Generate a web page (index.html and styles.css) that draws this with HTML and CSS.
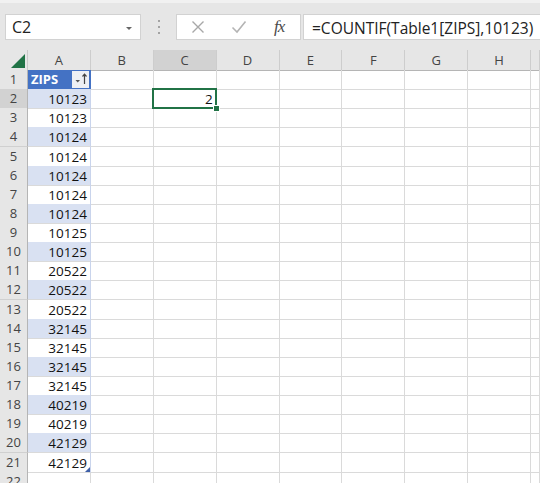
FILE: index.html
```html
<!DOCTYPE html>
<html lang="en">
<head>
    <meta charset="UTF-8">
    <meta name="viewport" content="width=device-width, initial-scale=1.0">
    <title>COUNTIF ZIPS</title>
    <link rel="stylesheet" href="styles.css">
</head>
<body>
    <div class="toolbar">
        <div class="namebox">
            <span>C2</span>
            <span class="caret"></span>
        </div>
        <div class="grip"><span></span><span></span><span></span></div>
        <div class="fxbox">
            <svg class="icon-x" width="14" height="14" viewBox="0 0 14 14">
                <path d="M1.5 1.5 L12.5 12.5 M12.5 1.5 L1.5 12.5" stroke="#a8a8a8" stroke-width="1.4" fill="none"/>
            </svg>
            <svg class="icon-check" width="16" height="14" viewBox="0 0 16 14">
                <path d="M1.5 7.5 L6 12 L14.5 1.5" stroke="#b4b4b4" stroke-width="1.6" fill="none"/>
            </svg>
            <span class="fx">fx</span>
        </div>
        <div class="formula">=COUNTIF(Table1[ZIPS],10123)</div>
    </div>

    <div class="sheet">
        <div class="row head">
            <div class="corner">
                <svg width="14" height="14" viewBox="0 0 14 14"><path d="M14 0 L14 14 L0 14 Z" fill="#217346"/></svg>
            </div>
            <div class="ch">A</div>
            <div class="ch">B</div>
            <div class="ch sel-head">C</div>
            <div class="ch">D</div>
            <div class="ch">E</div>
            <div class="ch">F</div>
            <div class="ch">G</div>
            <div class="ch">H</div>
            <div class="ch"></div>
        </div>

        <div class="row">
            <div class="rh">1</div>
            <div class="c th">
                <span>ZIPS</span>
                <span class="filter">
                    <svg width="17" height="17" viewBox="0 0 17 17">
                        <path d="M3.5 9 L8 9 L5.75 11.5 Z" fill="#555"/>
                        <path d="M12.5 13 L12.5 3.5 M10.5 5.5 L12.5 3.2 L14.5 5.5" stroke="#444" stroke-width="1.2" fill="none"/>
                    </svg>
                </span>
            </div>
            <div class="c"></div><div class="c"></div><div class="c"></div><div class="c"></div><div class="c"></div><div class="c"></div><div class="c"></div><div class="c"></div>
        </div>
        <div class="row">
            <div class="rh sel-head">2</div>
            <div class="c a band">10123</div>
            <div class="c"></div>
            <div class="c sel">2<span class="handle"></span></div>
            <div class="c"></div><div class="c"></div><div class="c"></div><div class="c"></div><div class="c"></div><div class="c"></div>
        </div>
        <div class="row">
            <div class="rh">3</div><div class="c a">10123</div>
            <div class="c"></div><div class="c"></div><div class="c"></div><div class="c"></div><div class="c"></div><div class="c"></div><div class="c"></div><div class="c"></div>
        </div>
        <div class="row">
            <div class="rh">4</div><div class="c a band">10124</div>
            <div class="c"></div><div class="c"></div><div class="c"></div><div class="c"></div><div class="c"></div><div class="c"></div><div class="c"></div><div class="c"></div>
        </div>
        <div class="row">
            <div class="rh">5</div><div class="c a">10124</div>
            <div class="c"></div><div class="c"></div><div class="c"></div><div class="c"></div><div class="c"></div><div class="c"></div><div class="c"></div><div class="c"></div>
        </div>
        <div class="row">
            <div class="rh">6</div><div class="c a band">10124</div>
            <div class="c"></div><div class="c"></div><div class="c"></div><div class="c"></div><div class="c"></div><div class="c"></div><div class="c"></div><div class="c"></div>
        </div>
        <div class="row">
            <div class="rh">7</div><div class="c a">10124</div>
            <div class="c"></div><div class="c"></div><div class="c"></div><div class="c"></div><div class="c"></div><div class="c"></div><div class="c"></div><div class="c"></div>
        </div>
        <div class="row">
            <div class="rh">8</div><div class="c a band">10124</div>
            <div class="c"></div><div class="c"></div><div class="c"></div><div class="c"></div><div class="c"></div><div class="c"></div><div class="c"></div><div class="c"></div>
        </div>
        <div class="row">
            <div class="rh">9</div><div class="c a">10125</div>
            <div class="c"></div><div class="c"></div><div class="c"></div><div class="c"></div><div class="c"></div><div class="c"></div><div class="c"></div><div class="c"></div>
        </div>
        <div class="row">
            <div class="rh">10</div><div class="c a band">10125</div>
            <div class="c"></div><div class="c"></div><div class="c"></div><div class="c"></div><div class="c"></div><div class="c"></div><div class="c"></div><div class="c"></div>
        </div>
        <div class="row">
            <div class="rh">11</div><div class="c a">20522</div>
            <div class="c"></div><div class="c"></div><div class="c"></div><div class="c"></div><div class="c"></div><div class="c"></div><div class="c"></div><div class="c"></div>
        </div>
        <div class="row">
            <div class="rh">12</div><div class="c a band">20522</div>
            <div class="c"></div><div class="c"></div><div class="c"></div><div class="c"></div><div class="c"></div><div class="c"></div><div class="c"></div><div class="c"></div>
        </div>
        <div class="row">
            <div class="rh">13</div><div class="c a">20522</div>
            <div class="c"></div><div class="c"></div><div class="c"></div><div class="c"></div><div class="c"></div><div class="c"></div><div class="c"></div><div class="c"></div>
        </div>
        <div class="row">
            <div class="rh">14</div><div class="c a band">32145</div>
            <div class="c"></div><div class="c"></div><div class="c"></div><div class="c"></div><div class="c"></div><div class="c"></div><div class="c"></div><div class="c"></div>
        </div>
        <div class="row">
            <div class="rh">15</div><div class="c a">32145</div>
            <div class="c"></div><div class="c"></div><div class="c"></div><div class="c"></div><div class="c"></div><div class="c"></div><div class="c"></div><div class="c"></div>
        </div>
        <div class="row">
            <div class="rh">16</div><div class="c a band">32145</div>
            <div class="c"></div><div class="c"></div><div class="c"></div><div class="c"></div><div class="c"></div><div class="c"></div><div class="c"></div><div class="c"></div>
        </div>
        <div class="row">
            <div class="rh">17</div><div class="c a">32145</div>
            <div class="c"></div><div class="c"></div><div class="c"></div><div class="c"></div><div class="c"></div><div class="c"></div><div class="c"></div><div class="c"></div>
        </div>
        <div class="row">
            <div class="rh">18</div><div class="c a band">40219</div>
            <div class="c"></div><div class="c"></div><div class="c"></div><div class="c"></div><div class="c"></div><div class="c"></div><div class="c"></div><div class="c"></div>
        </div>
        <div class="row">
            <div class="rh">19</div><div class="c a">40219</div>
            <div class="c"></div><div class="c"></div><div class="c"></div><div class="c"></div><div class="c"></div><div class="c"></div><div class="c"></div><div class="c"></div>
        </div>
        <div class="row">
            <div class="rh">20</div><div class="c a band">42129</div>
            <div class="c"></div><div class="c"></div><div class="c"></div><div class="c"></div><div class="c"></div><div class="c"></div><div class="c"></div><div class="c"></div>
        </div>
        <div class="row">
            <div class="rh">21</div><div class="c a last">42129<span class="resize"></span></div>
            <div class="c"></div><div class="c"></div><div class="c"></div><div class="c"></div><div class="c"></div><div class="c"></div><div class="c"></div><div class="c"></div>
        </div>
        <div class="row">
            <div class="rh">22</div><div class="c"></div>
            <div class="c"></div><div class="c"></div><div class="c"></div><div class="c"></div><div class="c"></div><div class="c"></div><div class="c"></div><div class="c"></div>
        </div>
    </div>
</body>
</html>
```

FILE: styles.css
```css
body {
    margin: 0;
    width: 540px;
    height: 483px;
    overflow: hidden;
    background-color: #fff;
    font-family: "Open Sans", "Noto Sans", sans-serif;
    color: #222;
}

/* name box + formula bar */
.toolbar {
    height: 50px;
    box-sizing: border-box;
    background-color: #e6e6e6;
    border-top: 3px solid #f1f1f1;
    padding-top: 11px;
    display: flex;
    align-items: flex-start;
}
.namebox {
    margin-left: 5px;
    width: 136px;
    height: 26px;
    box-sizing: border-box;
    background-color: #fff;
    border: 1px solid #d2d2d2;
    display: flex;
    align-items: center;
    justify-content: space-between;
    padding: 0 8px 0 6px;
    font-size: 16px;
    color: #222;
}
.caret {
    width: 0;
    height: 0;
    border-left: 3px solid transparent;
    border-right: 3px solid transparent;
    border-top: 3px solid #666;
    margin-top: 2px;
}
.grip {
    width: 35px;
    height: 26px;
    display: flex;
    flex-direction: column;
    align-items: center;
    justify-content: center;
    gap: 4px;
}
.grip span {
    width: 2px;
    height: 2px;
    background-color: #a3a3a3;
}
.fxbox {
    width: 125px;
    height: 26px;
    box-sizing: border-box;
    background-color: #fff;
    border: 1px solid #d2d2d2;
    display: flex;
    align-items: center;
    padding-left: 14px;
}
.icon-check {
    margin-left: 26px;
}
.fx {
    margin-left: 27px;
    font-family: "Liberation Serif", serif;
    font-style: italic;
    font-size: 17px;
    color: #4a4a4a;
    letter-spacing: -1px;
}
.formula {
    flex: 1;
    margin-left: 2px;
    height: 26px;
    box-sizing: border-box;
    background-color: #fff;
    border: 1px solid #d2d2d2;
    border-right: none;
    padding-left: 8px;
    font-size: 15.5px;
    line-height: 26px;
    color: #222;
    white-space: nowrap;
}

/* grid */
.row {
    display: grid;
    grid-template-columns: 28px repeat(8, 62.875px) 1fr;
    height: 19.13px;
}
.row.head {
    height: 20px;
    background-color: #e6e6e6;
}
.corner {
    border-right: 1px solid #c9c9c9;
    border-bottom: 1px solid #b5b5b5;
    display: flex;
    align-items: flex-end;
    justify-content: flex-end;
    padding: 0 2px 2px 0;
}
.ch {
    box-sizing: border-box;
    border-right: 1px solid #cdcdcd;
    border-bottom: 1px solid #b5b5b5;
    text-align: center;
    font-size: 13px;
    line-height: 20px;
    color: #444;
}
.rh {
    box-sizing: border-box;
    background-color: #e6e6e6;
    border-right: 1px solid #b5b5b5;
    border-bottom: 1px solid #d0d0d0;
    text-align: center;
    font-size: 13px;
    line-height: 19px;
    color: #444;
}
.sel-head {
    background-color: #d2d2d2;
}
.c {
    box-sizing: border-box;
    border-right: 1px solid #dadada;
    border-bottom: 1px solid #dadada;
    display: flex;
    align-items: flex-end;
    justify-content: flex-end;
    padding: 0 3px 0 0;
    font-size: 13.5px;
    line-height: 17px;
    color: #111;
}
.c.band {
    background-color: #d9e1f2;
}
.c.a {
    border-right-color: #c9d4ec;
}
.c.th {
    background-color: #4472c4;
    color: #fff;
    font-size: 13px;
    font-weight: bold;
    justify-content: space-between;
    align-items: center;
    padding: 0 1px 0 3px;
    border-right-color: #4472c4;
}
.filter {
    width: 17px;
    height: 17px;
    background-color: #eef0f4;
    display: block;
}
.filter svg {
    display: block;
}
.c.sel {
    position: relative;
}
.c.sel::before {
    content: "";
    position: absolute;
    left: -2px;
    top: -1px;
    right: -1px;
    bottom: -1px;
    border: 2px solid #217346;
}
.handle {
    position: absolute;
    right: -4px;
    bottom: -4px;
    width: 5px;
    height: 5px;
    background-color: #217346;
    border: 1px solid #fff;
}
.c.last {
    position: relative;
}
.resize {
    position: absolute;
    right: 0;
    bottom: 0;
    width: 0;
    height: 0;
    border-left: 5px solid transparent;
    border-bottom: 5px solid #3e5fa8;
}
```
